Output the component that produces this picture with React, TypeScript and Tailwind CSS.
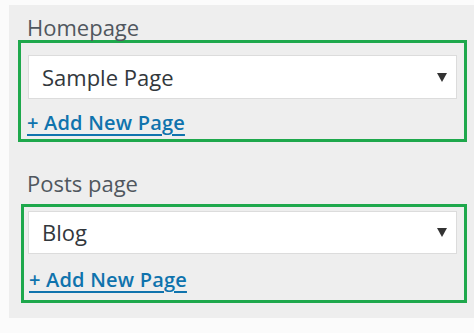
import React from 'react';

interface PageSelectProps {
  value: string;
  className?: string;
}

const Arrow = () => (
  <svg className="w-[10px] h-[9px] text-[#333]" viewBox="0 0 10 9" fill="currentColor">
    <polygon points="0,0 10,0 5,9" />
  </svg>
);

const PageSelect: React.FC<PageSelectProps> = ({ value, className }) => (
  <div
    className={`flex items-center justify-between bg-white border border-[#dcdcdc] pl-[13px] pr-[9px] ${className ?? ''}`}
  >
    <span className="text-[22px] text-[#32373c] leading-normal">{value}</span>
    <Arrow />
  </div>
);

const AddLink = ({ className }: { className?: string }) => (
  <a
    href="#"
    className={`block w-fit text-[20px] leading-[24px] font-semibold tracking-[0.2px] text-[#0f73ad] underline underline-offset-[4px] decoration-[1.5px] ${className ?? ''}`}
  >
    + Add New Page
  </a>
);

export default function App() {
  return (
    <div
      className="w-[474px] h-[333px] bg-[#fbfbfb] pt-[5px] pl-[9px] overflow-hidden"
      style={{ fontFamily: '"Open Sans", "Noto Sans", sans-serif' }}
    >
      <div className="h-[313px] bg-[#eeeeee] pt-[9px]">
        {/* Homepage */}
        <div className="ml-[18px] text-[22px] leading-[26px] text-[#50575e]">Homepage</div>
        <div className="ml-[9px] w-[449px] border-[3px] border-[#1ea84c] pt-[12px] pl-[7px] pr-[7px] pb-[4px]">
          <PageSelect value="Sample Page" className="h-[44px]" />
          <AddLink className="mt-[12px] -ml-[1px]" />
        </div>

        {/* Posts page */}
        <div className="mt-[28px] ml-[18px] text-[22px] leading-[26px] text-[#50575e]">Posts page</div>
        <div className="mt-[8px] ml-[12px] w-[446px] border-[3px] border-[#1ea84c] pt-[4px] pl-[4px] pr-[7px] pb-[8px]">
          <PageSelect value="Blog" className="h-[43px]" />
          <AddLink className="mt-[14px] ml-[1px]" />
        </div>
      </div>
    </div>
  );
}
